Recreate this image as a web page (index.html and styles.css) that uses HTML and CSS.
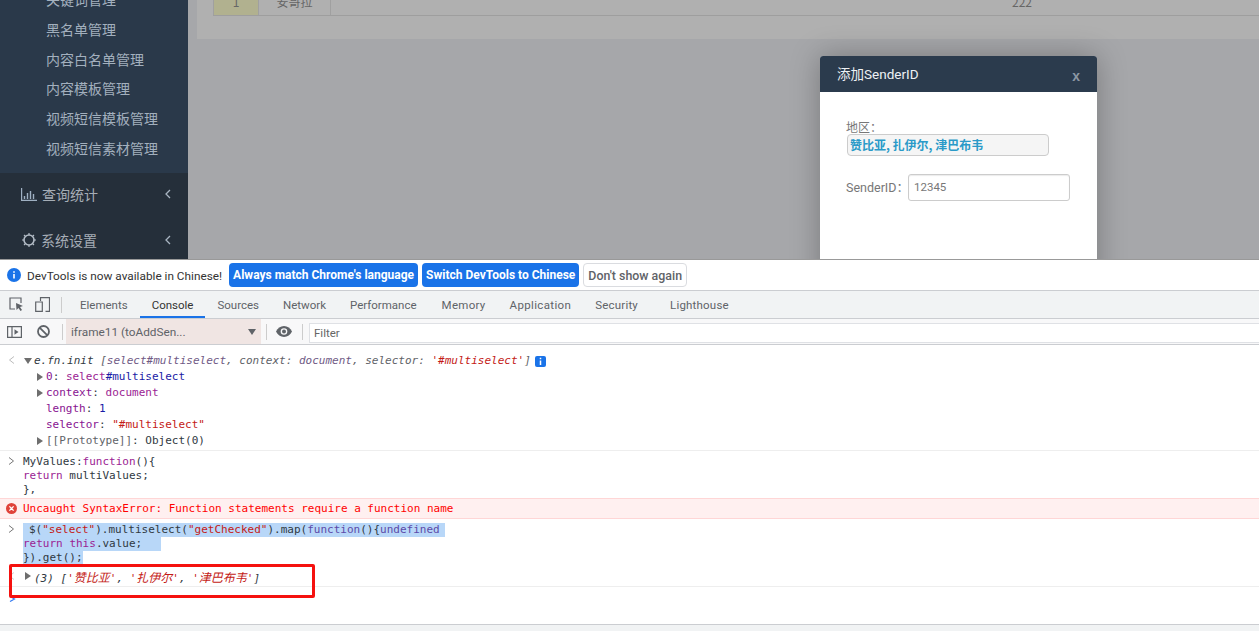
FILE: index.html
```html
<!DOCTYPE html>
<html lang="zh">
<head>
<meta charset="utf-8">
<title>DevTools</title>
<link rel="stylesheet" href="styles.css">
</head>
<body>
<div class="app">
  <section class="site">
    <aside class="sidebar">
      <ul class="submenu">
        <li>关键词管理</li>
        <li>黑名单管理</li>
        <li>内容白名单管理</li>
        <li>内容模板管理</li>
        <li>视频短信模板管理</li>
        <li>视频短信素材管理</li>
      </ul>
      <div class="menu">
        <div class="menu-item">
          <svg class="menu-icon" width="16" height="13" viewBox="0 0 16 13"><path d="M.5 0v12.500H16M3.500 8v3M6.500 5v6M9.500 3v8M12.500 6v5" fill="none" stroke="#9fb0c2" stroke-width="1.400"/></svg>
          <span>查询统计</span>
          <svg class="chev" width="6" height="10" viewBox="0 0 6 10"><path d="M5 1 1 5l4 4" fill="none" stroke="#a9b5c2" stroke-width="1.300"/></svg>
        </div>
        <div class="menu-item second">
          <svg class="menu-icon" width="14" height="14" viewBox="0 0 14 14"><circle cx="7" cy="7" r="5" fill="none" stroke="#b3bcc6" stroke-width="1.600"/><path d="M7 0v2M7 12v2M0 7h2M12 7h2M2 2l1.400 1.400M10.600 10.600 12 12M12 2l-1.400 1.400M3.400 10.600 2 12" stroke="#b3bcc6" stroke-width="1.200"/></svg>
          <span>系统设置</span>
          <svg class="chev" width="6" height="10" viewBox="0 0 6 10"><path d="M5 1 1 5l4 4" fill="none" stroke="#a9b5c2" stroke-width="1.300"/></svg>
        </div>
      </div>
    </aside>
    <main class="content">
      <div class="panel">
        <div class="table-row">
          <div class="cell num">1</div>
          <div class="cell name">安哥拉</div>
          <div class="cell value">222</div>
        </div>
      </div>
    </main>
    <div class="modal">
      <div class="modal-head"><span class="modal-title">添加SenderID</span><b class="close">x</b></div>
      <div class="modal-body">
        <label class="area-label">地区：</label>
        <div class="area-box">赞比亚, 扎伊尔, 津巴布韦</div>
        <div class="field">
          <label>SenderID：</label>
          <div class="input">12345</div>
        </div>
      </div>
    </div>
  </section>

  <section class="devtools">
    <div class="infobar">
      <svg width="14" height="14" viewBox="0 0 14 14"><circle cx="7" cy="7" r="7" fill="#1a73e8"/><path d="M7 6v4.500M7 3.200v1.500" stroke="#fff" stroke-width="1.600"/></svg>
      <span class="info-text">DevTools is now available in Chinese!</span>
      <span class="btn primary first">Always match Chrome's language</span>
      <span class="btn primary">Switch DevTools to Chinese</span>
      <span class="btn plain">Don't show again</span>
    </div>
    <div class="tabbar">
      <svg class="tool-a" width="15" height="15" viewBox="0 0 15 15"><path d="M6 12H1V1h11v5" fill="none" stroke="#5f6368" stroke-width="1.200"/><path d="m7 6 7 3-3 1 2 3-1.500 1-2-3-2 2z" fill="#5f6368"/></svg>
      <svg class="tool-b" width="15" height="15" viewBox="0 0 15 15"><path d="M5.500 4V.7h9v13.600h-4M.7 5h6.600v9.300H.7z" fill="none" stroke="#5f6368" stroke-width="1.200"/></svg>
      <i class="sep tab-sep"></i>
      <nav class="tabs">
        <span class="tab">Elements</span>
        <span class="tab active">Console</span>
        <span class="tab">Sources</span>
        <span class="tab">Network</span>
        <span class="tab">Performance</span>
        <span class="tab memory">Memory</span>
        <span class="tab application">Application</span>
        <span class="tab security">Security</span>
        <span class="tab last">Lighthouse</span>
      </nav>
    </div>
    <div class="toolbar">
      <svg class="tool-c" width="15" height="12" viewBox="0 0 15 12"><path d="M.6.600h13.800v10.800H.6zM5 .6v10.800" fill="none" stroke="#5f6368" stroke-width="1.200"/><path d="m7.500 3.200 4 2.800-4 2.800z" fill="#5f6368"/></svg>
      <svg class="tool-d" width="13" height="13" viewBox="0 0 13 13"><circle cx="6.500" cy="6.500" r="5.500" fill="none" stroke="#5f6368" stroke-width="1.800"/><path d="m2.600 2.600 7.800 7.800" stroke="#5f6368" stroke-width="1.800"/></svg>
      <i class="sep bar-sep"></i>
      <div class="context"><span>iframe11 (toAddSen...</span><svg width="8" height="6" viewBox="0 0 8 6"><path d="M0 0h8L4 6z" fill="#5f6368"/></svg></div>
      <i class="sep eye-sep"></i>
      <svg class="eye" width="16" height="11" viewBox="0 0 16 11"><path d="M8 0C4.500 0 1.600 2.200 0 5.500 1.600 8.800 4.500 11 8 11s6.400-2.200 8-5.500C14.400 2.200 11.500 0 8 0z" fill="#5f6368"/><circle cx="8" cy="5.500" r="3.300" fill="#f8f8f9"/><circle cx="8" cy="5.500" r="2" fill="#5f6368"/></svg>
      <i class="sep eye-sep2"></i>
      <div class="filter">Filter</div>
    </div>
    <div class="console">
      <div class="clipped"><span>Object {context: document, selector: '#multiselect'}</span></div>
      <div class="entry object">
        <div class="line head"><svg class="gutter back" width="7" height="8" viewBox="0 0 7 8"><path d="M6 .5 1.500 4 6 7.500" fill="none" stroke="#bbb" stroke-width="1"/></svg><svg class="tri down" width="8" height="6" viewBox="0 0 8 6"><path d="M0 0h8L4 6z" fill="#6e6e6e"/></svg><em><span class="fg">e.fn.init</span> [<span class="purple-i">select#multiselect</span>, context: <span class="purple-i">document</span>, selector: <span class="red">'#multiselect'</span>]</em><svg class="badge" width="11" height="11" viewBox="0 0 11 11"><rect width="11" height="11" rx="2" fill="#1a73e8"/><path d="M5.500 4.500V9M5.500 1.800v1.500" stroke="#fff" stroke-width="1.500"/></svg></div>
        <div class="line prop"><svg class="tri" width="6" height="8" viewBox="0 0 6 8"><path d="M0 0v8l6-4z" fill="#6e6e6e"/></svg><span><span class="key">0</span>: <span class="purple">select</span><span class="navy">#multiselect</span></span></div>
        <div class="line prop"><svg class="tri" width="6" height="8" viewBox="0 0 6 8"><path d="M0 0v8l6-4z" fill="#6e6e6e"/></svg><span><span class="key">context</span>: <span class="purple">document</span></span></div>
        <div class="line prop plain-prop"><span><span class="key">length</span>: <span class="navy">1</span></span></div>
        <div class="line prop plain-prop"><span><span class="key">selector</span>: <span class="red">"#multiselect"</span></span></div>
        <div class="line prop"><svg class="tri" width="6" height="8" viewBox="0 0 6 8"><path d="M0 0v8l6-4z" fill="#6e6e6e"/></svg><span><span class="gray">[[Prototype]]</span>: Object(0)</span></div>
      </div>
      <div class="entry code">
        <svg class="gutter prompt" width="7" height="8" viewBox="0 0 7 8"><path d="M1 .5 5.500 4 1 7.500" fill="none" stroke="#777" stroke-width="1"/></svg>
        <div>MyValues:<span class="purple">function</span>(){</div>
        <div><span class="purple">return</span> multiValues;</div>
        <div>},</div>
      </div>
      <div class="entry error">
        <svg class="err-icon" width="11" height="11" viewBox="0 0 11 11"><circle cx="5.500" cy="5.500" r="5.500" fill="#e0433a"/><path d="m3.400 3.400 4.200 4.200M7.600 3.400 3.400 7.600" stroke="#fff" stroke-width="1.300"/></svg>
        <span>Uncaught SyntaxError: Function statements require a function name</span>
      </div>
      <div class="entry code selected">
        <svg class="gutter prompt" width="7" height="8" viewBox="0 0 7 8"><path d="M1 .5 5.500 4 1 7.500" fill="none" stroke="#777" stroke-width="1"/></svg>
        <div><span class="sel lead">$(<span class="red-s">"select"</span>).multiselect(<span class="red-s">"getChecked"</span>).map(<span class="blue-k">function</span>(){<span class="blue-k">undefined</span></span></div>
        <div><span class="sel pad"><span class="purple">return</span> <span class="purple">this</span>.value;</span></div>
        <div><span class="sel">}).get();</span></div>
      </div>
      <div class="entry result">
        <svg class="gutter back result-back" width="7" height="8" viewBox="0 0 7 8"><path d="M6 .5 1.500 4 6 7.500" fill="none" stroke="#ccc" stroke-width="1"/></svg>
        <svg class="tri" width="6" height="8" viewBox="0 0 6 8"><path d="M0 0v8l6-4z" fill="#6e6e6e"/></svg><em>(3) [<span class="red">'<span class="han">赞比亚</span>'</span>, <span class="red">'<span class="han">扎伊尔</span>'</span>, <span class="red">'<span class="han">津巴布韦</span>'</span>]</em>
      </div>
      <svg class="next" width="7" height="6" viewBox="0 0 7 6"><path d="M1 .5 5.500 3 1 5.500" fill="none" stroke="#367cf1" stroke-width="1.200"/></svg>
      <div class="highlight"></div>
    </div>
    <div class="statusbar"></div>
  </section>
</div>
</body>
</html>
```

FILE: styles.css
```css
* { box-sizing: border-box; }
html, body { margin: 0; height: 100%; overflow: hidden; background: #fff; }
ul { list-style: none; margin: 0; padding: 0; }
.app { height: 631px; display: flex; flex-direction: column; font-family: Roboto, "Noto Sans CJK SC", sans-serif; }

.site { height: 259px; flex: none; display: flex; position: relative; overflow: hidden; background: #a6a7aa; font-family: "Noto Sans CJK SC", "Liberation Sans", sans-serif; }
.sidebar { width: 188px; flex: none; display: flex; flex-direction: column; justify-content: flex-end; background: #2a394a; overflow: hidden; }
.submenu { padding: 0 0 9.500px 46px; color: #a3b0be; font-size: 14px; }
.submenu li { height: 29.700px; line-height: 29.700px; }
.menu { height: 86px; flex: none; background: #252f3a; color: #a5adb6; font-size: 14px; padding: 0 0 0 21px; }
.menu-item { height: 18px; margin-top: 12px; display: flex; align-items: center; gap: 5px; position: relative; }
.menu-item.second { margin-top: 28px; padding-left: 1px; }
.chev { position: absolute; left: 144px; top: 4px; }

.content { flex: 1; padding-left: 9px; }
.panel { height: 39px; background: #b0b0b0; padding: 0 0 0 16px; display: flex; align-items: flex-start; overflow: hidden; }
.table-row { height: 16px; flex: 1; display: flex; border-bottom: 1px solid #9e9e9e; font-size: 12px; color: #666; line-height: 4px; text-align: center; overflow: hidden; }
.cell { border-right: 1px solid #a0a0a0; overflow: hidden; }
.num { width: 46px; background: #b1b18f; border-left: 1px solid #a0a0a0; }
.name { width: 72px; }
.value { flex: 1; border-right: 0; padding-left: 681px; text-align: left; }

.modal { position: absolute; left: 820px; top: 56px; width: 277px; height: 300px; background: #fff; border-radius: 3px 3px 0 0; box-shadow: 0 0 30px rgba(0,0,0,.28); color: #777; }
.modal-head { height: 36px; background: #2b3b4d; color: #eef1f4; font-size: 13.500px; font-family: Roboto, "Noto Sans CJK SC", sans-serif; display: flex; align-items: center; justify-content: space-between; padding: 0 17px; border-radius: 3px 3px 0 0; }
.modal-title { margin-bottom: 2px; }
.close { color: #8b97a4; font: bold 14px "Liberation Sans", sans-serif; margin-top: 3px; }
.modal-body { padding: 28px 27px 0 26px; font-size: 12px; }
.area-label { display: block; height: 14px; line-height: 14px; }
.area-box { margin-left: 1px; width: 202px; height: 22px; line-height: 20px; border: 1px solid #ccc; border-radius: 4px; background: #f5f5f5; color: #2a9ac8; font-weight: 700; font-size: 12px; padding-left: 2px; }
.field { display: flex; align-items: center; margin-top: 18px; }
.field label { width: 62px; font-size: 12.500px; line-height: 24px; font-family: Roboto, "Noto Sans CJK SC", sans-serif; }
.input { width: 162px; height: 27px; line-height: 25px; border: 1px solid #ccc; border-radius: 3px; padding-left: 5px; font-size: 11.500px; font-family: Roboto, sans-serif; box-shadow: inset 0 1px 1px rgba(0,0,0,.08); }

.devtools { flex: 1; display: flex; flex-direction: column; min-height: 0; border-top: 1px solid #999; }
.infobar { height: 31px; flex: none; display: flex; align-items: center; padding-left: 7px; font-size: 11.800px; color: #333; border-bottom: 1px solid #cbcdd1; background: #fff; }
.info-text { margin-left: 6px; line-height: 16px; padding-top: 1px; }
.btn { height: 24px; line-height: 25px; padding: 0 4px; border-radius: 4px; margin-left: 4px; font-size: 12px; white-space: nowrap; }
.btn.first { margin-left: 7px; }
.primary { background: #1a73e8; color: #fff; font-weight: 700; }
.plain { border: 1px solid #dadce0; color: #5f6368; font-weight: 500; font-size: 12.400px; line-height: 23px; }

.tabbar { height: 28px; flex: none; display: flex; align-items: center; background: #f1f3f4; border-bottom: 1px solid #cbcdd1; padding-left: 9px; }
.tool-b { margin-left: 11px; }
.sep { display: block; width: 1px; height: 16px; background: #ccc; flex: none; }
.tab-sep { margin-left: 11px; }
.tabs { display: flex; height: 100%; margin-left: 6px; }
.tab { padding: 0 12px; line-height: 28px; font-size: 11.500px; color: #5f6368; }
.tab.active { color: #333; border-bottom: 2px solid #1a73e8; height: 27px; }
.tab.memory { margin-left: 1px; letter-spacing: .3px; }
.tab.application { letter-spacing: .35px; }
.tab.security { letter-spacing: .2px; }
.tab.last { margin-left: 8px; letter-spacing: .2px; }

.toolbar { height: 26px; flex: none; display: flex; align-items: center; background: #f8f8f9; border-bottom: 1px solid #cbcdd1; padding-left: 7px; }
.tool-d { margin-left: 15px; }
.bar-sep { margin-left: 12px; }
.context { width: 195px; height: 100%; margin-left: 3px; background: #f0e5e3; display: flex; align-items: center; justify-content: space-between; padding: 0 5px; font-size: 11.800px; color: #5f6368; }
.eye-sep { margin-left: 5px; }
.eye { margin-left: 9px; }
.eye-sep2 { margin-left: 10px; }
.filter { flex: 1; height: 20px; margin: 2px 0 0 6px; background: #fff; border: 1px solid #dfe1e5; border-right: 0; padding-left: 4px; line-height: 18px; font-size: 11.500px; color: #666; }

.console { flex: 1; min-height: 0; position: relative; overflow: hidden; background: #fff; font-family: "DejaVu Sans Mono", "Noto Sans CJK SC", monospace; font-size: 11px; color: #303942; }
.clipped { height: 8px; overflow: hidden; display: flex; align-items: flex-end; padding-left: 33px; white-space: pre; color: #8a8f96; }
.clipped span { display: block; flex: none; line-height: 14px; height: 14px; margin-bottom: 6px; }
.entry { position: relative; }
.gutter { position: absolute; left: 8px; }
.back { top: 3px; }
.prompt { top: 6px; }
.line { height: 16px; line-height: 16px; display: flex; align-items: center; white-space: pre; }
.code > div { white-space: pre; }
.head { padding-left: 24px; color: #5f6368; }
.head .tri { margin-right: 2px; }
.badge { margin-left: 4px; }
.prop { padding-left: 37px; }
.prop .tri { margin-right: 3px; }
.plain-prop { padding-left: 46px; }
.object { border-bottom: 1px solid #eeeeee; padding-bottom: 1px; }
.code { padding: 4px 0 0 23px; line-height: 14px; }
.error { margin-top: 1px; height: 21px; line-height: 20px; background: #fff0f0; border-top: 1px solid #ffd6d6; border-bottom: 1px solid #ffd6d6; color: #ff0000; padding-left: 23px; white-space: nowrap; }
.err-icon { position: absolute; left: 6px; top: 4px; }
.selected { padding-top: 4px; }
.sel { background: #b8d7f8; display: inline-block; height: 14px; }
.lead { padding-left: 6px; padding-right: 5px; }
.pad { padding-right: 19px; }
.result { padding: 1px 0 0 25px; height: 22px; border-bottom: 1px solid #eeeeee; display: flex; align-items: center; white-space: pre; }
.result .tri { margin-right: 3px; }
.result-back { top: 7px; }
.next { position: absolute; left: 9px; top: 251px; }
.highlight { position: absolute; left: 9px; top: 219px; width: 306px; height: 34px; border: 3px solid #f5110f; border-radius: 2px; }
.fg { color: #303942; }
.key { color: #881391; }
.purple { color: #9b2393; }
.purple-i { color: #6f5a85; }
.navy { color: #1a1aa6; }
.red { color: #c41a16; }
.red-s { color: #c41a16; }
.blue-k { color: #5c4aa8; }
.gray { color: #5f6368; }
.han { font-size: 12px; font-family: "Noto Sans CJK SC", sans-serif; }

.statusbar { height: 7px; flex: none; background: #f1f3f4; border-top: 1px solid #cbcdd1; }
```
